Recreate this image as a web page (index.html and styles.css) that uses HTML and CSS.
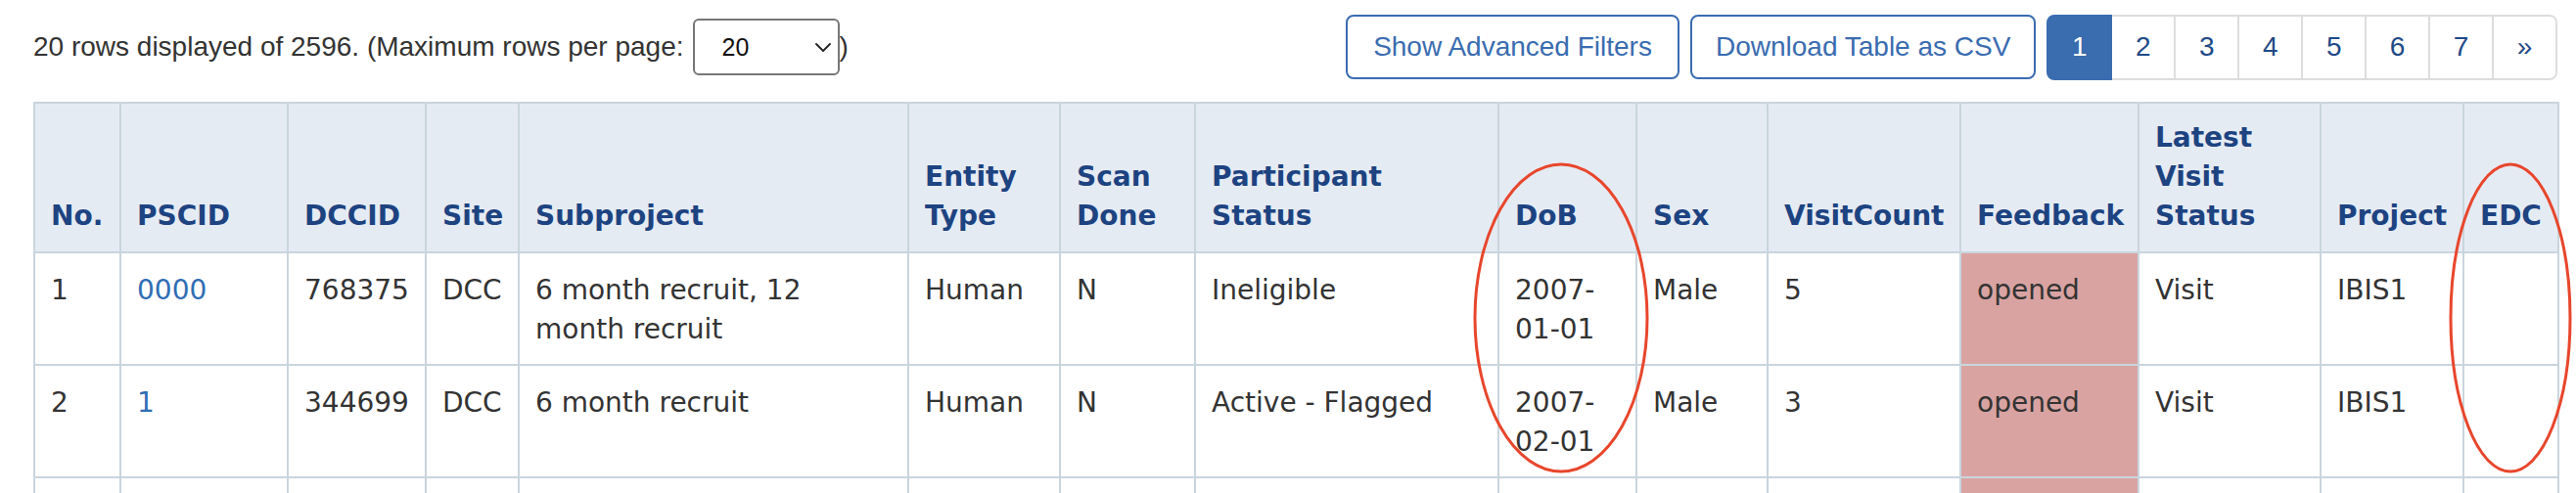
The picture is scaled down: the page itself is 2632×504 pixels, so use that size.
FILE: index.html
```html
<!DOCTYPE html>
<html lang="en">
<head>
<meta charset="utf-8">
<title>Candidate List</title>
<link rel="stylesheet" href="styles.css">
</head>
<body>
<div class="page">
  <div class="toolbar">
    <div class="summary">
      <span>20 rows displayed of 2596. (Maximum rows per page:</span>
      <span class="select-wrap">
        <select class="rows-select">
          <option selected>20</option>
          <option>50</option>
          <option>100</option>
          <option>1000</option>
          <option>5000</option>
        </select>
        <svg class="chevron" viewBox="0 0 16 9" width="16" height="9"><path d="M1 1 L8 8 L15 1" fill="none" stroke="#222" stroke-width="1.8" stroke-linecap="round" stroke-linejoin="round"/></svg>
      </span>
      <span>)</span>
    </div>
    <div class="actions">
      <button class="btn btn-filters">Show Advanced Filters</button>
      <button class="btn">Download Table as CSV</button>
      <ul class="pagination">
        <li class="active"><a>1</a></li>
        <li><a>2</a></li>
        <li><a>3</a></li>
        <li><a>4</a></li>
        <li><a>5</a></li>
        <li><a>6</a></li>
        <li><a>7</a></li>
        <li><a>&raquo;</a></li>
      </ul>
    </div>
  </div>

  <table class="data">
    <thead>
      <tr>
        <th class="w-no">No.</th>
        <th class="w-pscid">PSCID</th>
        <th class="w-dccid">DCCID</th>
        <th class="w-site">Site</th>
        <th class="w-sub">Subproject</th>
        <th class="w-entity">Entity Type</th>
        <th class="w-scan">Scan Done</th>
        <th class="w-status">Participant Status</th>
        <th class="w-dob">DoB</th>
        <th class="w-sex">Sex</th>
        <th class="w-visits">VisitCount</th>
        <th class="w-feedback">Feedback</th>
        <th class="w-latest">Latest Visit Status</th>
        <th class="w-project">Project</th>
        <th class="w-edc">EDC</th>
      </tr>
    </thead>
    <tbody>
      <tr>
        <td>1</td>
        <td><a class="link">0000</a></td>
        <td>768375</td>
        <td>DCC</td>
        <td>6 month recruit, 12 month recruit</td>
        <td>Human</td>
        <td>N</td>
        <td>Ineligible</td>
        <td>2007-01-01</td>
        <td>Male</td>
        <td>5</td>
        <td class="feedback">opened</td>
        <td>Visit</td>
        <td>IBIS1</td>
        <td></td>
      </tr>
      <tr>
        <td>2</td>
        <td><a class="link">1</a></td>
        <td>344699</td>
        <td>DCC</td>
        <td>6 month recruit</td>
        <td>Human</td>
        <td>N</td>
        <td>Active - Flagged</td>
        <td>2007-02-01</td>
        <td>Male</td>
        <td>3</td>
        <td class="feedback">opened</td>
        <td>Visit</td>
        <td>IBIS1</td>
        <td></td>
      </tr>
      <tr class="row-partial">
        <td></td>
        <td></td>
        <td></td>
        <td></td>
        <td></td>
        <td></td>
        <td></td>
        <td></td>
        <td></td>
        <td></td>
        <td></td>
        <td class="feedback"></td>
        <td></td>
        <td></td>
        <td></td>
      </tr>
    </tbody>
  </table>

  <svg class="annotations" viewBox="0 0 2632 504" width="2632" height="504">
    <ellipse cx="1595" cy="325" rx="88" ry="157" fill="none" stroke="#e8462c" stroke-width="3"/>
    <ellipse cx="2565" cy="325" rx="61" ry="157" fill="none" stroke="#e8462c" stroke-width="3"/>
  </svg>
</div>
</body>
</html>
```

FILE: styles.css
```css
html, body {
  margin: 0;
  padding: 0;
  background: #ffffff;
  overflow: hidden;
}

.page {
  position: relative;
  width: 2632px;
  height: 504px;
  box-sizing: border-box;
  padding: 15px 19px 0 34px;
  font-family: "Liberation Sans", Arial, Helvetica, sans-serif;
  color: #333333;
  overflow: hidden;
}

.toolbar {
  display: flex;
  justify-content: space-between;
  align-items: center;
  height: 66px;
}

.summary {
  display: flex;
  align-items: center;
  font-size: 28px;
  line-height: 40px;
  color: #333333;
}

.select-wrap {
  position: relative;
  display: inline-block;
  margin-left: 9px;
  height: 58px;
}

.rows-select {
  appearance: none;
  -webkit-appearance: none;
  width: 150px;
  height: 58px;
  margin: 0;
  padding: 0 0 0 28px;
  border: 2px solid #777777;
  border-radius: 6px;
  background: #ffffff;
  font-family: "Liberation Sans", Arial, sans-serif;
  font-size: 25px;
  color: #111111;
}

.chevron {
  position: absolute;
  left: 125px;
  top: 25px;
  pointer-events: none;
}

.actions {
  display: flex;
  align-items: center;
  gap: 11px;
}

.btn {
  font-family: "Liberation Sans", Arial, sans-serif;
  font-size: 28px;
  line-height: 40px;
  padding: 11px 24px;
  color: #3a6cb0;
  background: #ffffff;
  border: 2px solid #3a6cb0;
  border-radius: 8px;
}

.btn-filters {
  padding-left: 26px;
  padding-right: 26px;
}

.pagination {
  display: flex;
  list-style: none;
  margin: 0;
  padding: 0;
}

.pagination li a {
  display: block;
  font-size: 28px;
  line-height: 40px;
  padding: 11px 23.7px 12px;
  text-align: center;
  color: #1f4a87;
  background: #ffffff;
  border: 2px solid #dddddd;
  margin-left: -2px;
}

.pagination li:first-child a {
  margin-left: 0;
  border-radius: 8px 0 0 8px;
}

.pagination li:last-child a {
  border-radius: 0 8px 8px 0;
}

.pagination li.active a {
  background: #3a6cb0;
  border-color: #3a6cb0;
  color: #ffffff;
  position: relative;
  z-index: 1;
}

.data {
  margin-top: 23px;
  width: 2579px;
  table-layout: fixed;
  border-collapse: collapse;
  font-family: "DejaVu Sans", Verdana, sans-serif;
  font-size: 28px;
  line-height: 40px;
}

.data th,
.data td {
  box-sizing: border-box;
  border: 2px solid #c9d5dd;
  text-align: left;
}

.data th {
  background: #e5ebf3;
  color: #1d4381;
  font-weight: bold;
  vertical-align: bottom;
  padding: 15px 16px 16px;
}

.data td {
  vertical-align: top;
  padding: 18px 16px 15px;
  color: #333333;
}

.data .row-partial td {
  height: 114px;
}

.data td.feedback {
  background: #d9a3a2;
}

.link {
  color: #2f6db4;
  text-decoration: none;
}

.w-no { width: 88px; }
.w-pscid { width: 171px; }
.w-dccid { width: 141px; }
.w-site { width: 95px; }
.w-sub { width: 398px; }
.w-entity { width: 155px; }
.w-scan { width: 138px; }
.w-status { width: 310px; }
.w-dob { width: 141px; }
.w-sex { width: 134px; }
.w-visits { width: 197px; }
.w-feedback { width: 182px; }
.w-latest { width: 186px; }
.w-project { width: 146px; }
.w-edc { width: 97px; }

.annotations {
  position: absolute;
  left: 0;
  top: 0;
  pointer-events: none;
}
```
